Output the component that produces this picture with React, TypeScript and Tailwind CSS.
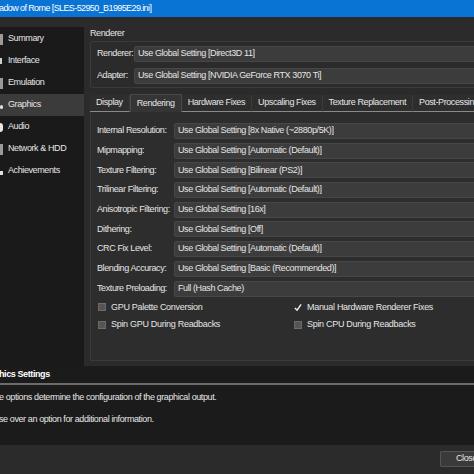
import React from "react";

const font = { fontFamily: '"Liberation Sans", Arial, sans-serif' };

const navItems = ["Summary", "Interface", "Emulation", "Graphics", "Audio", "Network & HDD", "Achievements"];

const tabs = ["Display", "Rendering", "Hardware Fixes", "Upscaling Fixes", "Texture Replacement", "Post-Processing"];

const rows: [string, string][] = [
  ["Internal Resolution:", "Use Global Setting [8x Native (~2880p/5K)]"],
  ["Mipmapping:", "Use Global Setting [Automatic (Default)]"],
  ["Texture Filtering:", "Use Global Setting [Bilinear (PS2)]"],
  ["Trilinear Filtering:", "Use Global Setting [Automatic (Default)]"],
  ["Anisotropic Filtering:", "Use Global Setting [16x]"],
  ["Dithering:", "Use Global Setting [Off]"],
  ["CRC Fix Level:", "Use Global Setting [Automatic (Default)]"],
  ["Blending Accuracy:", "Use Global Setting [Basic (Recommended)]"],
  ["Texture Preloading:", "Full (Hash Cache)"],
];

function Combo({ text }: { text: string }) {
  return (
    <div className="flex h-[16px] flex-1 items-center overflow-hidden whitespace-nowrap rounded-[2px] border border-[#474747] bg-[#3c3c3c] pl-[3px] text-[9px] tracking-[-0.4px] text-[#e6e6e6]">
      {text}
    </div>
  );
}

function NavIcon({ i }: { i: number }) {
  if (i === 3) return <div className="mt-[4px] h-[4px] w-[3px] self-start rounded-full bg-[#e0e0e0]" />;
  if (i === 4) return <div className="h-[9px] w-[3px] rounded-r-full bg-[#e8e8e8]" />;
  if (i === 1) return <div className="h-[6px] w-[2px] bg-[#d0d0d0]" />;
  if (i === 6) return <div className="mt-[4px] h-[4px] w-[3px] self-start bg-[#e0e0e0]" />;
  return <div className="h-[11px] w-[3px] bg-[#9a9a9a]" />;
}

function Check({ checked, label }: { checked?: boolean; label: string }) {
  return (
    <div className="flex items-center gap-[5px] whitespace-nowrap text-[9px] tracking-[-0.3px] text-[#e6e6e6]">
      {checked ? (
        <span className="flex h-[8px] w-[8px] items-center justify-center">
          <svg width="9" height="9" viewBox="0 0 9 9">
            <path d="M1 5 L3.5 7.5 L8 1" stroke="#f0f0f0" strokeWidth="1.6" fill="none" />
          </svg>
        </span>
      ) : (
        <span className="h-[8px] w-[8px] border border-[#6a6a6a] bg-[#555]" />
      )}
      <span>{label}</span>
    </div>
  );
}

export default function App() {
  return (
    <div className="flex h-[474px] w-[474px] flex-col overflow-hidden bg-[#2b2b2b] text-[9px] tracking-[-0.4px]" style={font}>
      <div className="flex h-[17px] shrink-0 items-center whitespace-nowrap bg-[#0a74d4] text-[9px] tracking-[-0.6px] text-white">
        <span className="-ml-[1px]">adow of Rome [SLES-52950_B1995E29.ini]</span>
      </div>
      <div className="h-[10px] shrink-0 bg-[#2b2b2b]" />
      <div className="flex h-[339px] shrink-0">
        <div className="flex w-[84px] shrink-0 flex-col bg-[#1a1a1a] pt-[1px]">
          {navItems.map((n, i) => (
            <div
              key={n}
              className={`flex h-[22px] items-center gap-[5px] whitespace-nowrap text-[9px] text-[#e6e6e6] ${i === 3 ? "bg-[#3b3b3b]" : ""}`}
            >
              <div className="flex w-[3px] items-center">
                <NavIcon i={i} />
              </div>
              <span>{n}</span>
            </div>
          ))}
        </div>
        <div className="flex flex-1 flex-col pl-[6px]">
          <div className="h-[13px] text-[9px] leading-[12px] text-[#e6e6e6]">Renderer</div>
          <div className="mt-[1px] flex h-[47px] flex-col justify-center gap-[6px] rounded-[2px] border border-[#3a3a3a] pl-[6px]">
            <div className="flex items-center">
              <span className="w-[37px] text-[#e6e6e6]">Renderer:</span>
              <Combo text="Use Global Setting [Direct3D 11]" />
            </div>
            <div className="flex items-center">
              <span className="w-[37px] text-[#e6e6e6]">Adapter:</span>
              <Combo text="Use Global Setting [NVIDIA GeForce RTX 3070 Ti]" />
            </div>
          </div>
          <div className="mt-[6px] flex h-[18px] items-end whitespace-nowrap">
            {tabs.map((t, i) => (
              <div
                key={t}
                className={`flex items-center justify-center border-[#4a4a4a] px-[6px] text-[#e6e6e6] ${
                  i === 1
                    ? "h-[18px] border border-b-0 bg-[#353535]"
                    : "h-[17px] border-b border-r border-b-[#8a8a8a] border-r-[#3c3c3c] bg-[#2e2e2e]"
                }`}
              >
                {t}
              </div>
            ))}
          </div>
          <div className="flex h-[249px] flex-col border border-t-0 border-[#3a3a3a] bg-[#2d2d2d] pl-[6px] pt-[11px]">
            <div className="flex flex-col gap-[3.7px]">
              {rows.map(([l, v]) => (
                <div key={l} className="flex items-center">
                  <span className="w-[77px] whitespace-nowrap text-[#e6e6e6]">{l}</span>
                  <Combo text={v} />
                </div>
              ))}
            </div>
            <div className="mt-[4px] grid grid-cols-[196px_1fr] gap-y-[4px] pl-[1px]">
              <Check label="GPU Palette Conversion" />
              <Check checked label="Manual Hardware Renderer Fixes" />
              <Check label="Spin GPU During Readbacks" />
              <Check label="Spin CPU During Readbacks" />
            </div>
          </div>
        </div>
      </div>
      <div className="flex h-[79px] shrink-0 flex-col bg-[#1b1b1b]">
        <div className="flex h-[19px] items-center border-b-2 border-[#6b6b6b] text-[9px] font-bold text-white">
          <span className="-ml-[1px]">hics Settings</span>
        </div>
        <div className="whitespace-nowrap pt-[1px] text-[9px] leading-[22px] text-[#e6e6e6]">
          <div className="-ml-[1px]">e options determine the configuration of the graphical output.</div>
          <div className="-ml-[1px]">se over an option for additional information.</div>
        </div>
      </div>
      <div className="flex flex-1 items-start justify-end bg-[#2b2b2b] pt-[6px]">
        <div className="flex h-[16px] w-[34px] shrink-0 items-center overflow-hidden whitespace-nowrap rounded-l-[2px] border border-r-0 border-[#555] bg-[#3a3a3a] pl-[15px] text-[9px] text-[#e6e6e6]">
          Close
        </div>
      </div>
    </div>
  );
}
